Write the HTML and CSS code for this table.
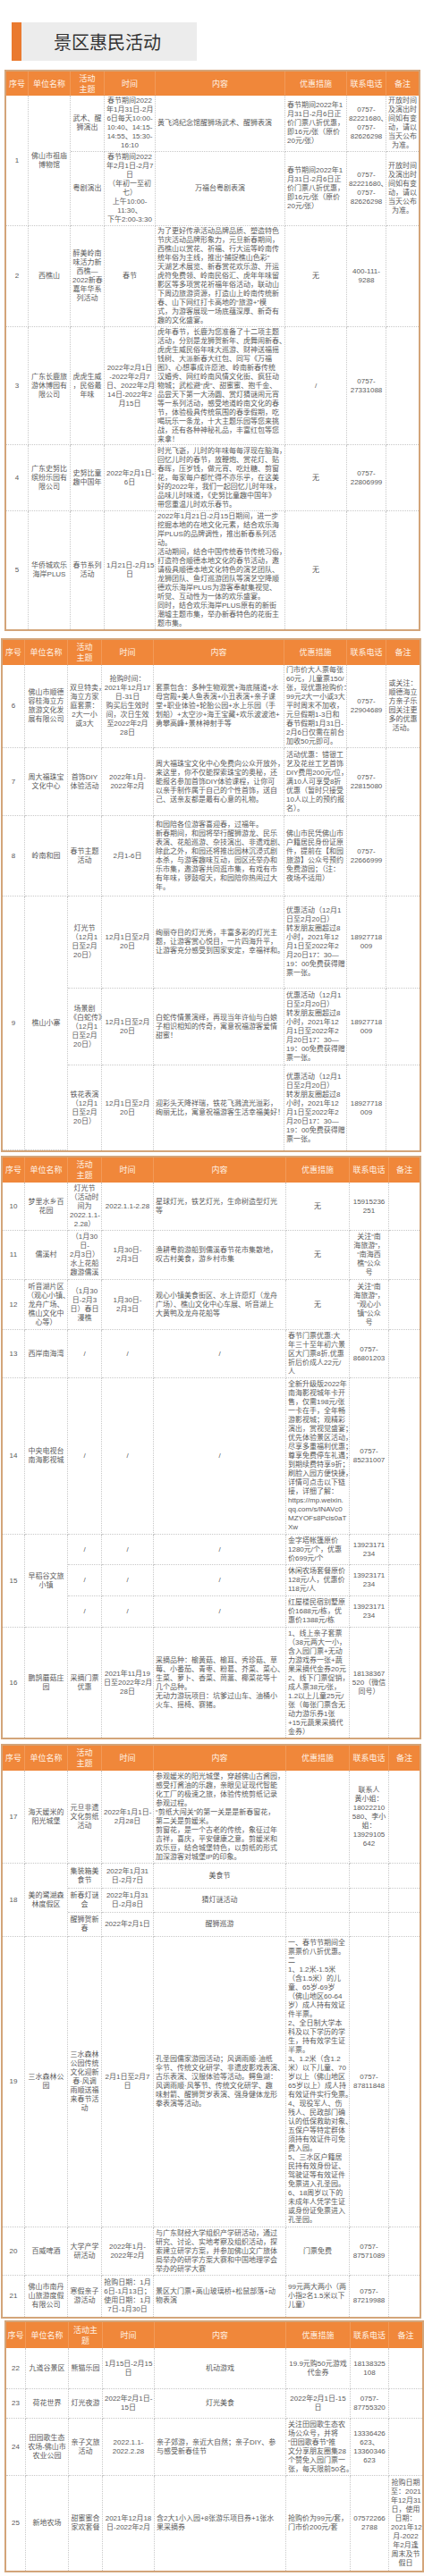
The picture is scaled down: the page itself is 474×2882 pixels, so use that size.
FILE: index.html
```html
<!DOCTYPE html>
<html lang="zh-CN">
<head>
<meta charset="utf-8">
<title>景区惠民活动</title>
<link rel="stylesheet" href="styles.css">
</head>
<body>
<div class="page">
  <div class="title"><span class="title-bar"></span><h1 class="title-text">景区惠民活动</h1></div>

  <table class="tbl t1">
    <colgroup><col><col><col><col><col><col><col><col></colgroup>
    <tr class="h27"><th>序号</th><th>单位名称</th><th>活动<br>主题</th><th>时间</th><th>内容</th><th>优惠措施</th><th>联系电话</th><th>备注</th></tr>
    <tr class="h63">
      <td rowspan="2">1</td><td rowspan="2">佛山市祖庙<br>博物馆</td><td>武术、醒<br>狮演出</td>
      <td>春节期间2022<br>年1月31日-2月<br>6日每天10:00-<br>10:40、14:15-<br>14:55、15:30-<br>16:10</td>
      <td class="l">黄飞鸿纪念馆醒狮场武术、醒狮表演</td>
      <td class="l">春节期间2022年1<br>月31日-2月6日正<br>价门票八折优惠，<br>即16元/张（原价<br>20元/张）</td>
      <td>0757-<br>82221680、<br>0757-<br>82626298</td>
      <td>开放时间<br>及演出时<br>间如有变<br>动，请以<br>当天公布<br>为准。</td>
    </tr>
    <tr class="h83">
      <td>粤剧演出</td>
      <td>春节期间2022<br>年2月1日-2月7<br>日<br>（年初一至初<br>七）<br>上午10:00-<br>11:30、<br>下午2:00-3:30</td>
      <td>万福台粤剧表演</td>
      <td class="l">春节期间2022年1<br>月31日-2月6日正<br>价门票八折优惠，<br>即16元/张（原价<br>20元/张）</td>
      <td>0757-<br>82221680、<br>0757-<br>82626298</td>
      <td>开放时间<br>及演出时<br>间如有变<br>动，请以<br>当天公布<br>为准。</td>
    </tr>
    <tr class="h113">
      <td>2</td><td>西樵山</td><td>醉美岭南<br>味活力新<br>西樵—<br>2022新春<br>嘉年华系<br>列活动</td><td>春节</td>
      <td class="l">为了更好传承活动品牌品质、塑造特色<br>节庆活动品牌形象力，元旦新春期间，<br>西樵山以赏花、祈福、行大运等岭南传<br>统年俗为主线，推出“捕捉樵山色彩”<br>天湖艺术展览、新春赏花欢乐游、开运<br>虎符免费领、岭南民俗汇、虎年年味留<br>影区等多项赏花祈福年俗活动，联动山<br>下周边旅游资源，打造山上岭南传统新<br>春、山下网红打卡高地的“旅游+”模<br>式，为游客展现一场底蕴深厚、新奇有<br>趣的文化盛宴。</td>
      <td>无</td><td>400-111-<br>9288</td><td></td>
    </tr>
    <tr class="h132">
      <td>3</td><td>广东长鹿旅<br>游休博园有<br>限公司</td><td>虎虎生威<br>，民俗最<br>年味</td>
      <td>2022年2月1日<br>-2022年2月7<br>日、2022年2月<br>14日-2022年2<br>月15日</td>
      <td class="l">虎年春节，长鹿为您准备了十二项主题<br>活动，分别是龙狮贺新年、虎舞闹新春、<br>虎虎生威民俗年味大巡游、财神送福摇<br>钱树、大派新春大红包、同写《万福<br>图》、心想事成许愿池、岭南新春传统<br>汉婚秀、网红岭南风情文化街、疯狂动<br>物城；武松避“虎”、甜蜜蜜、抱千金、<br>品尝天下第一大汤圆、赏灯猜谜闹元宵<br>等一系列活动，感受地道岭南文化的春<br>节，体验极具传统氛围的春季假期，吃<br>喝玩乐一条龙，十大主题乐园等您来挑<br>战，还有各种神秘礼品，丰富红包等您<br>来拿！</td>
      <td>/</td><td>0757-<br>27331088</td><td></td>
    </tr>
    <tr class="h74">
      <td>4</td><td>广东史努比<br>缤纷乐园有<br>限公司</td><td>史努比童<br>趣中国年</td><td>2022年2月1日-<br>6日</td>
      <td class="l">时光飞逝，儿时的年味每每浮现在脑海，<br>回忆儿时的春节，放鞭炮、赏花灯、贴<br>春晖，压岁钱，做元宵、吃灶糖、剪窗<br>花，每家每户都忙得不亦乐乎，在这美<br>好的2022年，我们一起回忆儿时年味，<br>品味儿时味道，《史努比童趣中国年》<br>带您重温儿时欢乐春节。</td>
      <td>无</td><td>0757-<br>22806999</td><td></td>
    </tr>
    <tr class="h132">
      <td>5</td><td>华侨城欢乐<br>海岸PLUS</td><td>春节系列<br>活动</td><td>1月21日-2月15<br>日</td>
      <td class="l">2022年1月21日-2月15日期间，进一步<br>挖掘本地的在地文化元素，结合欢乐海<br>岸PLUS的品牌调性，推出新春系列活<br>动。<br>活动期间，结合中国传统春节传统习俗，<br>打造符合顺德本地文化的春节活动，邀<br>请极具顺德本地文化特色的演艺团队、<br>龙狮团队、鱼灯巡游团队等演艺空降顺<br>德欢乐海岸PLUS为游客奉献集视觉、<br>听觉、互动性为一体的欢乐盛宴。<br>同时，结合欢乐海岸PLUS原有的新街<br>潮墟主题市集，举办新春特色的花街主<br>题市集。</td>
      <td>无</td><td></td><td></td>
    </tr>
  </table>

  <table class="tbl t2">
    <colgroup><col><col><col><col><col><col><col><col></colgroup>
    <tr class="h28"><th>序号</th><th>单位名称</th><th>活动<br>主题</th><th>时间</th><th>内容</th><th>优惠措施</th><th>联系电话</th><th>备注</th></tr>
    <tr class="h93">
      <td>6</td><td>佛山市顺德<br>容桂海立方<br>旅游文化发<br>展有限公司</td><td>双旦特卖，<br>海立方家<br>庭套票：<br>2大一小<br>或3大</td>
      <td>抢购时间：<br>2021年12月17<br>日-31日<br>购买后生效时<br>间，次日生效<br>至2022年2月<br>28日</td>
      <td class="l">套票包含：多种生物观赏+海底隧道+水<br>母宫殿+美人鱼表演+小丑表演+亲子课<br>堂+职业体验+轮胎公园+水上乐园（手<br>划船）+太空沙+海王宝藏+欢乐波波池+<br>勇攀高峰+景林神射手等</td>
      <td class="l">门市价大人票每张<br>60元，儿童票150/<br>张，现优惠抢购价：<br>99元2大一小或3大<br>平时周末不加收，<br>元旦假期1-3日和<br>春节假期1月31日-<br>2月6日仅需在前台<br>加收50元即可。</td>
      <td>0757-<br>22904689</td>
      <td>或关注：<br>顺德海立<br>方亲子乐<br>园关注更<br>多的优惠<br>活动。</td>
    </tr>
    <tr class="h76">
      <td>7</td><td>周大福珠宝<br>文化中心</td><td>首饰DIY<br>体验活动</td><td>2022年1月-<br>2022年2月</td>
      <td class="l">周大福珠宝文化中心免费向公众开放外，<br>来这里，你不仅能探索珠宝的奥秘，还<br>能报名参加首饰DIY体验课程，让你可<br>以亲手制作属于自己的个性首饰，送自<br>己、送亲友都是最有心意的礼物。</td>
      <td class="l">活动优惠：错银工<br>艺及花丝工艺首饰<br>DIY费用200元/位，<br>满10人可享受8折<br>优惠（暂时只接受<br>10人以上的预约报<br>名）。</td>
      <td>0757-<br>22815080</td><td></td>
    </tr>
    <tr class="h90">
      <td>8</td><td>岭南和园</td><td>春节主题<br>活动</td><td>2月1-6日</td>
      <td class="l">和园陪各位游客喜迎春，过福年。<br>新春期间，和园将举行醒狮游龙、民乐<br>表演、花船巡游、杂技演出、非遗戏剧、<br>除此之外，和园还将推出园林沉浸式剧<br>本杀，与游客趣味互动，园区还举办和<br>乐市集，邀游客共同逛市集，有戏有市<br>有年味，锣鼓喧天，和园陪你热闹过大<br>年。</td>
      <td class="l">佛山市民凭佛山市<br>户籍居民身份证原<br>件，提前在【和园<br>旅游】公众号预约<br>免费游园；（注：<br>夜场不适用）</td>
      <td>0757-<br>22666999</td><td></td>
    </tr>
    <tr class="h103">
      <td rowspan="3">9</td><td rowspan="3">樵山小寨</td><td>灯光节<br>（12月1<br>日至2月<br>20日）</td><td>12月1日至2月<br>20日</td>
      <td class="l">绚丽夺目的灯光秀，丰富多彩的灯光主<br>题，让游客赏心悦目，一片四海升平，<br>让游客充分感受到国家安定，幸福祥和。</td>
      <td class="l">优惠活动（12月1<br>日至2月20日）<br>转发朋友圈超过8<br>小时，2021年12<br>月1日至2022年2<br>月20日17：30—<br>19：00免费获得赠<br>票一张。</td>
      <td>18927718<br>009</td><td></td>
    </tr>
    <tr class="h86">
      <td>场景剧<br>《白蛇传》<br>（12月1<br>日至2月<br>20日）</td><td>12月1日至2月<br>20日</td>
      <td class="l">白蛇传情景演绎，再现当年许仙与白娘<br>子相识相知的传奇，寓意祝福游客爱情<br>甜蜜！</td>
      <td class="l">优惠活动（12月1<br>日至2月20日）<br>转发朋友圈超过8<br>小时，2021年12<br>月1日至2022年2<br>月20日17：30—<br>19：00免费获得赠<br>票一张。</td>
      <td>18927718<br>009</td><td></td>
    </tr>
    <tr class="h95">
      <td>铁花表演<br>（12月1<br>日至2月<br>20日）</td><td>12月1日至2月<br>20日</td>
      <td class="l">迎彩头天降祥瑞，铁花飞溅流光溢彩，<br>绚丽无比，寓意祝福游客生活幸福美好！</td>
      <td class="l">优惠活动（12月1<br>日至2月20日）<br>转发朋友圈超过8<br>小时，2021年12<br>月1日至2022年2<br>月20日17：30—<br>19：00免费获得赠<br>票一张。</td>
      <td>18927718<br>009</td><td></td>
    </tr>
  </table>

  <table class="tbl t3">
    <colgroup><col><col><col><col><col><col><col><col></colgroup>
    <tr class="h28"><th>序号</th><th>单位名称</th><th>活动<br>主题</th><th>时间</th><th>内容</th><th>优惠措施</th><th>联系电话</th><th>备注</th></tr>
    <tr class="h54">
      <td>10</td><td>梦里水乡百<br>花园</td><td>灯光节<br>（活动时<br>间为<br>2022.1.1-<br>2.28）</td><td>2022.1.1-2.28</td>
      <td class="l">星球灯光，铁艺灯光，生命树造型灯光<br>等</td>
      <td>无</td><td>15915236<br>251</td><td></td>
    </tr>
    <tr class="h55">
      <td>11</td><td>儒溪村</td><td>（1月30<br>日-<br>2月3日）<br>水上花船<br>趣游儒溪</td><td>1月30日-<br>2月3日</td>
      <td class="l">渔耕粤韵游船到儒溪春节花市集散地，<br>叹古村美食，游乡村市集</td>
      <td>无</td><td>关注“南<br>海旅游”，<br>“南海西<br>樵”公众<br>号</td><td></td>
    </tr>
    <tr class="h56">
      <td>12</td><td>听音湖片区<br>（观心小镇、<br>龙舟广场、<br>樵山文化中<br>心等）</td><td>（1月30<br>日-2月3<br>日）春日<br>漫樵</td><td>1月30日-<br>2月3日</td>
      <td class="l">观心小镇美食街区、水上许愿灯（龙舟<br>广场）、樵山文化中心车展、听音湖上<br>大黄鸭及龙舟花船等</td>
      <td>无</td><td>关注“南<br>海旅游”，<br>“观心小<br>镇”公众<br>号</td><td></td>
    </tr>
    <tr class="h54">
      <td>13</td><td>西岸南海湾</td><td>/</td><td>/</td><td>/</td>
      <td class="l">春节门票优惠:大<br>年三十至年初六景<br>区大门票8折,优惠<br>折后价成人22元/<br>人</td>
      <td>0757-<br>86801203</td><td></td>
    </tr>
    <tr class="h175">
      <td>14</td><td>中央电视台<br>南海影视城</td><td>/</td><td>/</td><td>/</td>
      <td class="l">全新升级版2022年<br>南海影视城年卡开<br>售，仅需198元/张<br>一卡在手，全年畅<br>游影视城；观精彩<br>演出，赏视觉盛宴；<br>优先体验景区活动，<br>尽享多重福利优惠；<br>尊享免费停车礼遇；<br>到期续费特享9折；<br>刷脸入园方便快捷，<br>详情可点击以下链<br>接，详细了解：<br>https://mp.weixin.<br>qq.com/s/lNAVc0<br>MZYOFs8Pcis0aT<br>Xw</td>
      <td>0757-<br>85231007</td><td></td>
    </tr>
    <tr class="h34">
      <td rowspan="3">15</td><td rowspan="3">早稻谷文旅<br>小镇</td><td>/</td><td>/</td><td>/</td>
      <td class="l">金字塔帐篷原价<br>1280元/个，优惠<br>价699元/个</td>
      <td>13923171<br>234</td><td></td>
    </tr>
    <tr class="h35">
      <td>/</td><td>/</td><td>/</td>
      <td class="l">休闲农场套餐原价<br>128元/人，优惠价<br>118元/人</td>
      <td>13923171<br>234</td><td></td>
    </tr>
    <tr class="h35">
      <td>/</td><td>/</td><td>/</td>
      <td class="l">红屋楼民宿别墅原<br>价1688元/栋，优<br>惠价1388元/栋</td>
      <td>13923171<br>234</td><td></td>
    </tr>
    <tr class="h123">
      <td>16</td><td>鹏鹄蘑菇庄<br>园</td><td>采摘门票<br>优惠</td><td>2021年11月19<br>日至2022年2月<br>28日</td>
      <td class="l">采摘品种：榆黄菇、榆耳、秀珍菇、草<br>莓、小番茄、青枣、粉葛、芥菜、菜心、<br>生菜、萝卜、香菜、茼蒿、椰菜花等十<br>几个品种。<br>无动力游玩项目：坑爹过山车、油桶小<br>火车、摇椅、赛猪。</td>
      <td class="l">1、线上亲子套票<br>（38元两大一小，<br>含入园门票+无动<br>力游戏券一张+蔬<br>果采摘代金券20元<br>2、线下门票促销，<br>成人票38元/张，<br>1.2以上儿童25元/<br>张（每张门票含无<br>动力游乐券1张<br>+15元蔬果采摘代<br>金券）</td>
      <td>18138367<br>520（微信<br>同号）</td><td></td>
    </tr>
  </table>

  <table class="tbl t4">
    <colgroup><col><col><col><col><col><col><col><col></colgroup>
    <tr class="h28"><th>序号</th><th>单位名称</th><th>活动<br>主题</th><th>时间</th><th>内容</th><th>优惠措施</th><th>联系电话</th><th>备注</th></tr>
    <tr class="h104">
      <td>17</td><td>海天媛米的<br>阳光城堡</td><td>元旦非遗<br>文化剪纸<br>活动</td><td>2022年1月1日-<br>2月28日</td>
      <td class="l">参观媛米的阳光城堡，穿越佛山古酱园，<br>感受打酱油的乐趣，亲眼见证现代智能<br>化工厂的极速之旅，体验传统剪纸记录<br>参观过程。<br>“剪纸大闯关”的第一关是是新春窗花，<br>第二关是剪媛米。<br>剪窗花，是一个古老的传统，象征过年<br>吉祥，喜庆，平安健康之意。剪媛米和<br>欢乐豆，结合城堡特色，以剪纸的形式<br>加深游客对城堡IP的印象。</td>
      <td></td>
      <td>联系人<br>黄小姐：<br>18022210<br>580、李小<br>姐：<br>13929105<br>642</td><td></td>
    </tr>
    <tr class="h28">
      <td rowspan="3">18</td><td rowspan="3">美的鹭湖森<br>林度假区</td><td>集装箱美<br>食节</td><td>2022年1月31<br>日-2月7日</td><td>美食节</td><td></td><td></td><td></td>
    </tr>
    <tr class="h27">
      <td>新春灯谜<br>会</td><td>2022年1月31<br>日-2月8日</td><td>猜灯谜活动</td><td></td><td></td><td></td>
    </tr>
    <tr class="h27">
      <td>醒狮贺新<br>春</td><td>2022年2月1日</td><td>醒狮巡游</td><td></td><td></td><td></td>
    </tr>
    <tr class="h325">
      <td>19</td><td>三水森林公<br>园</td><td>三水森林<br>公园传统<br>文化迎新<br>春·风调<br>雨顺送福<br>来春节活<br>动</td><td>2月1日至2月7<br>日</td>
      <td class="l">孔圣园儒家游园活动；风调雨顺·油纸<br>伞节、传统文化研学、非遗皮影戏表演、<br>古乐表演、汉服体验等活动。鳄鱼湖：<br>风调雨顺·风筝节、传统文化研学、趣<br>味射箭、醒狮贺岁表演、强身健体龙形<br>拳表演等活动。</td>
      <td class="l">一、春节节期间全<br>票票价八折优惠。<br>二<br>1、1.2米-1.5米<br>（含1.5米）的儿<br>童、65岁-69岁<br>（佛山地区60-64<br>岁）成人持有效证<br>件半票。<br>2、全日制大学本<br>科及以下学历的学<br>生，持有效学生证<br>半票。<br>3、1.2米（含1.2<br>米）以下儿童、70<br>岁以上（佛山地区<br>65岁以上）成人持<br>有效证件实行免票。<br>4、现役军人、伤<br>残人、民政部门确<br>认的低保救助对象、<br>五保户等特定群体<br>须持有效证件可免<br>费入园。<br>5、三水区户籍居<br>民持有效身份证、<br>驾驶证等有效证件<br>免票进入孔圣园。<br>6、18周岁以下的<br>未成年人凭学生证<br>或身份证免票进入<br>孔圣园。</td>
      <td>0757-<br>87811848</td><td></td>
    </tr>
    <tr class="h54">
      <td>20</td><td>百威啤酒</td><td>大学产学<br>研活动</td><td>2022年1月-<br>2022年2月</td>
      <td class="l">与广东财经大学组织产学研活动，通过<br>研究、讨论、实地考察及组织活动，探<br>索建立研学方案，并参加佛山文广旅体<br>局举办的研学方案大赛和中国地理学会<br>举办的研学大赛</td>
      <td>门票免费</td><td>0757-<br>87571089</td><td></td>
    </tr>
    <tr class="h46">
      <td>21</td><td>佛山市南丹<br>山旅游度假<br>有限公司</td><td>寒假亲子<br>游活动</td><td>抢购日期：1月<br>6日-1月13日；<br>使用日期：1月<br>7日-1月30日</td>
      <td class="l">景区大门票+高山玻璃桥+松鼠部落+动<br>物表演</td>
      <td class="l">99元两大两小（两<br>小指2名1.5米以下<br>儿童）</td>
      <td>0757-<br>87219988</td><td></td>
    </tr>
  </table>

  <table class="tbl t5">
    <colgroup><col><col><col><col><col><col><col><col></colgroup>
    <tr class="h29"><th>序号</th><th>单位名称</th><th>活动主<br>题</th><th>时间</th><th>内容</th><th>优惠措施</th><th>联系电话</th><th>备注</th></tr>
    <tr class="h46">
      <td>22</td><td>九道谷景区</td><td>熊猫乐园</td><td>1月15日-2月15<br>日</td><td>机动游戏</td>
      <td>19.9元购50元游戏<br>代金券</td><td>18138325<br>108</td><td></td>
    </tr>
    <tr class="h33">
      <td>23</td><td>荷花世界</td><td>灯光夜游</td><td>2022年2月1日-<br>15日</td><td>灯光美食</td>
      <td>2022年2月1日-15<br>日</td><td>0757-<br>87755320</td><td></td>
    </tr>
    <tr class="h64">
      <td>24</td><td>田园歌生态<br>农场-佛山市<br>农业公园</td><td>亲子文旅<br>活动</td><td>2022.1.1-<br>2022.2.28</td>
      <td class="l">亲子郊游，亲近大自然；亲子DIY、参<br>与感受新春佳节</td>
      <td class="l">关注田园歌生态农<br>场公众号，并将<br>“田园歌春节”推<br>文分享朋友圈集28<br>个赞免入园门票一<br>张，每天限前50名。</td>
      <td>13336426<br>623、<br>13360346<br>623</td><td></td>
    </tr>
    <tr class="h106">
      <td>25</td><td>新地农场</td><td>甜蜜蜜合<br>家欢套餐</td><td>2021年12月18<br>日-2022年2月</td>
      <td class="l">含2大1小入园+8张游乐项目券+1张水<br>果采摘券</td>
      <td class="l">抢购价为99元/套，<br>门市价200元/套</td>
      <td>07572266<br>2788</td>
      <td>抢购日期<br>至：2021<br>年12月31<br>日，使用<br>日期：<br>2021年12<br>月-2022<br>年2月逢<br>周末及节<br>假日</td>
    </tr>
  </table>
</div>
</body>
</html>
```

FILE: styles.css
```css
html, body {
  margin: 0;
  padding: 0;
  background: #ffffff;
}

body {
  font-family: "Liberation Sans", "Noto Sans CJK SC", sans-serif;
  color: #5a5a5a;
}

.page {
  padding-top: 25px;
}

.title {
  display: flex;
  align-items: center;
  width: 207px;
  height: 43px;
  margin-left: 13px;
  background: #ececec;
}

.title-bar {
  width: 11px;
  height: 100%;
  background: #ea7a2f;
}

.title-text {
  margin: 0 0 0 36px;
  font-family: "Noto Sans CJK SC", sans-serif;
  font-size: 20px;
  font-weight: 400;
  line-height: 1;
  color: #333333;
}

.tbl {
  border: 2px solid #d3a57a;
  border-spacing: 0;
  border-collapse: separate;
  table-layout: fixed;
  font-size: 8px;
  line-height: 10px;
}

.tbl th {
  background: #f0873a;
  color: #fff1e4;
  font-weight: 400;
  font-size: 9px;
  line-height: 12px;
  padding: 0 1px;
  text-align: center;
  vertical-align: middle;
  border-right: 1px solid #f29a58;
  white-space: nowrap;
}

.tbl th:last-child {
  border-right: none;
}

.tbl td {
  padding: 0 2px;
  text-align: center;
  vertical-align: middle;
  white-space: nowrap;
  border-right: 1px dotted #c8c8c8;
  border-bottom: 1px dotted #c8c8c8;
}

.tbl td:last-child {
  border-right: none;
}

.tbl tr:last-child td {
  border-bottom: none;
}

.tbl td.l {
  text-align: left;
}

/* table placement */
.t1 { margin: 10px 0 0 5px; width: 465px; }
.t2 { margin: 8px 0 0 1px; width: 470px; }
.t3 { margin: 4px 0 0 1px; width: 470px; }
.t4 { margin: 5px 0 0 1px; width: 470px; }
.t5 { margin: 2px 0 0 5px; width: 469px; }

/* column widths */
.t1 col:nth-child(1) { width: 25px; }
.t1 col:nth-child(2) { width: 47px; }
.t1 col:nth-child(3) { width: 38px; }
.t1 col:nth-child(4) { width: 57px; }
.t1 col:nth-child(5) { width: 145px; }
.t1 col:nth-child(6) { width: 69px; }
.t1 col:nth-child(7) { width: 44px; }
.t1 col:nth-child(8) { width: 36px; }

.t2 col:nth-child(1) { width: 25px; }
.t2 col:nth-child(2) { width: 48px; }
.t2 col:nth-child(3) { width: 38px; }
.t2 col:nth-child(4) { width: 58px; }
.t2 col:nth-child(5) { width: 146px; }
.t2 col:nth-child(6) { width: 70px; }
.t2 col:nth-child(7) { width: 44px; }
.t2 col:nth-child(8) { width: 37px; }

.t3 col:nth-child(1), .t4 col:nth-child(1) { width: 25px; }
.t3 col:nth-child(2), .t4 col:nth-child(2) { width: 48px; }
.t3 col:nth-child(3), .t4 col:nth-child(3) { width: 38px; }
.t3 col:nth-child(4), .t4 col:nth-child(4) { width: 58px; }
.t3 col:nth-child(5), .t4 col:nth-child(5) { width: 148px; }
.t3 col:nth-child(6), .t4 col:nth-child(6) { width: 71px; }
.t3 col:nth-child(7), .t4 col:nth-child(7) { width: 44px; }
.t3 col:nth-child(8), .t4 col:nth-child(8) { width: 34px; }

.t5 col:nth-child(1) { width: 22px; }
.t5 col:nth-child(2) { width: 48px; }
.t5 col:nth-child(3) { width: 38px; }
.t5 col:nth-child(4) { width: 58px; }
.t5 col:nth-child(5) { width: 147px; }
.t5 col:nth-child(6) { width: 72px; }
.t5 col:nth-child(7) { width: 43px; }
.t5 col:nth-child(8) { width: 37px; }

/* row heights taken from the reference */
.h27 { height: 27px; }
.h28 { height: 28px; }
.h29 { height: 29px; }
.h33 { height: 33px; }
.h34 { height: 34px; }
.h35 { height: 35px; }
.h46 { height: 46px; }
.h54 { height: 54px; }
.h55 { height: 55px; }
.h56 { height: 56px; }
.h63 { height: 63px; }
.h64 { height: 64px; }
.h74 { height: 74px; }
.h76 { height: 76px; }
.h83 { height: 83px; }
.h86 { height: 86px; }
.h90 { height: 90px; }
.h93 { height: 93px; }
.h95 { height: 95px; }
.h103 { height: 103px; }
.h104 { height: 104px; }
.h106 { height: 106px; }
.h113 { height: 113px; }
.h123 { height: 123px; }
.h132 { height: 132px; }
.h175 { height: 175px; }
.h325 { height: 325px; }
```
